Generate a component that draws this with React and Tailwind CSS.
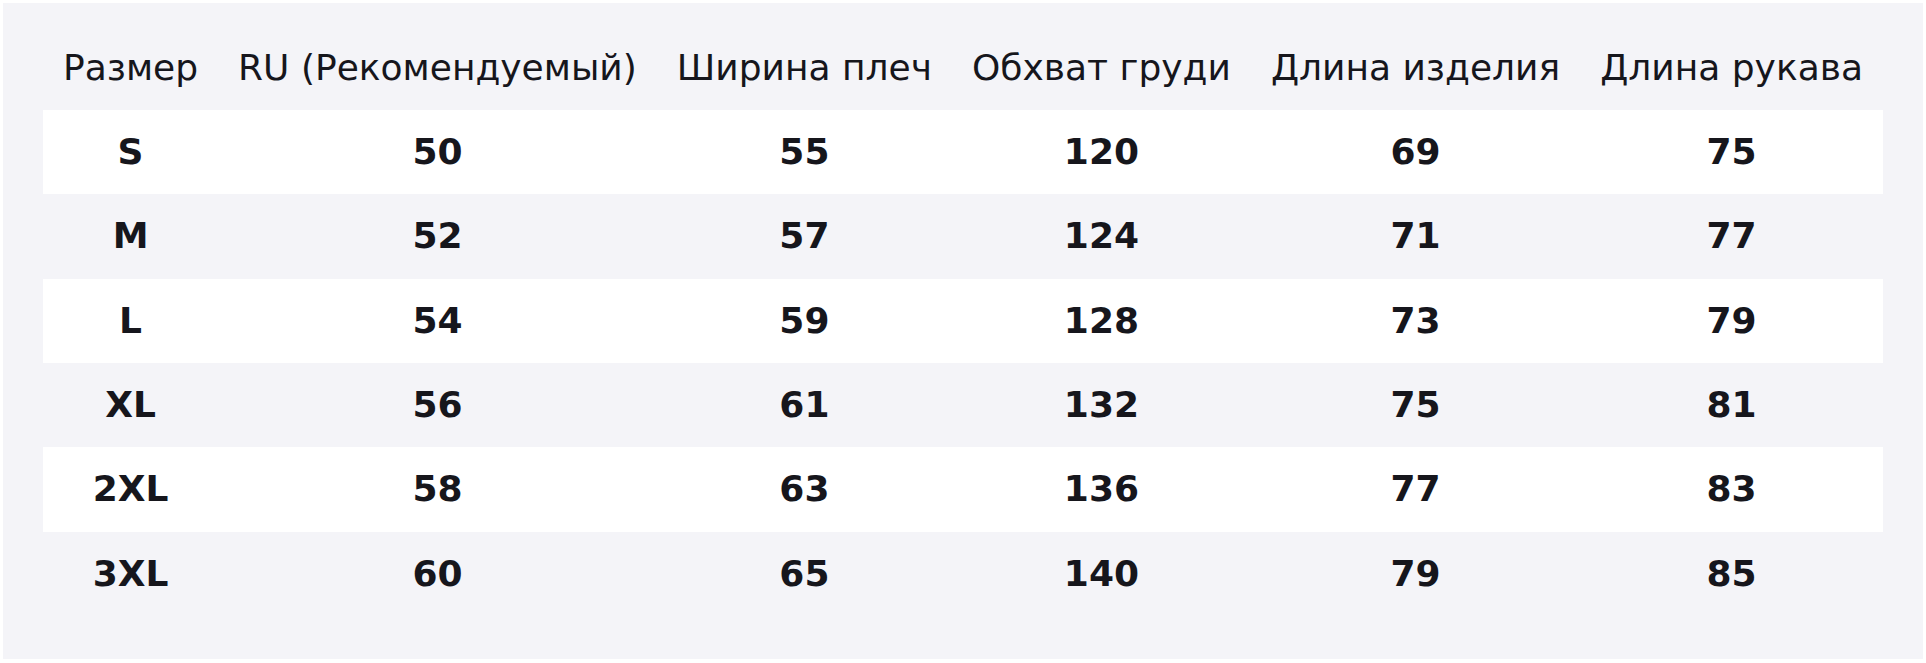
const headers = [
  "Размер",
  "RU (Рекомендуемый)",
  "Ширина плеч",
  "Обхват груди",
  "Длина изделия",
  "Длина рукава",
];

const rows = [
  ["S", "50", "55", "120", "69", "75"],
  ["M", "52", "57", "124", "71", "77"],
  ["L", "54", "59", "128", "73", "79"],
  ["XL", "56", "61", "132", "75", "81"],
  ["2XL", "58", "63", "136", "77", "83"],
  ["3XL", "60", "65", "140", "79", "85"],
];

export default function App() {
  return (
    <div className="min-h-screen bg-white p-[3px] font-['DejaVu_Sans',sans-serif] text-[#16161c]">
      <div className="bg-[#f4f4f8] px-10 pt-10 pb-[43px]">
        <table className="w-full border-collapse">
          <thead>
            <tr>
              {headers.map((h) => (
                <th
                  key={h}
                  className="px-5 pt-[3px] pb-[20px] text-center text-[36px] font-normal leading-[44px] whitespace-nowrap"
                >
                  {h}
                </th>
              ))}
            </tr>
          </thead>
          <tbody>
            {rows.map((r, i) => (
              <tr key={r[0]} className={i % 2 === 0 ? "bg-white" : ""}>
                {r.map((c, j) => (
                  <td
                    key={j}
                    className="px-5 py-[15px] text-center text-[36px] font-bold leading-[54.33px] whitespace-nowrap"
                  >
                    {c}
                  </td>
                ))}
              </tr>
            ))}
          </tbody>
        </table>
      </div>
    </div>
  );
}
